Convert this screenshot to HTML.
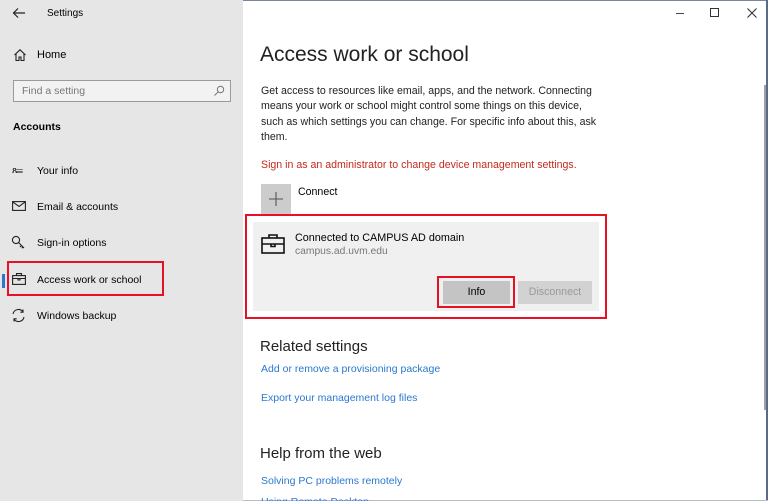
<!DOCTYPE html>
<html><head><style>
*{margin:0;padding:0;box-sizing:border-box}
html,body{width:768px;height:501px;overflow:hidden}
body{font-family:"Liberation Sans",sans-serif;background:#fff;position:relative;font-size:11px;color:#000}
.side{position:absolute;left:0;top:0;width:243px;height:501px;background:#e6e6e6}
.a{position:absolute;white-space:nowrap}
.red{border:2px solid #e81123;position:absolute}
.link{color:#2b78d0;font-size:10.5px}
.nav{font-size:10.5px}
svg{position:absolute}
</style></head><body>
<div style="position:absolute;left:0;top:0;width:768px;height:1px;background:#7a86a0"></div>
<div style="position:absolute;right:0;top:0;width:2px;height:501px;background:#5b6a8c"></div>
<div style="position:absolute;left:0;top:500px;width:768px;height:1px;background:#b8bcc8"></div>
<div class="side"></div>
<svg style="left:12px;top:7px" width="14" height="12" viewBox="0 0 14 12"><path d="M13 6H2M6 1.5L1.5 6L6 10.5" fill="none" stroke="#222" stroke-width="1.2"/></svg>
<div class="a" style="left:47px;top:8px;font-size:10px">Settings</div>
<svg style="left:13px;top:48px" width="14" height="14" viewBox="0 0 14 14"><path d="M1.5 7L7 1.8 12.5 7M3 5.5V12.5H6V9H8V12.5H11V5.5" fill="none" stroke="#222" stroke-width="1.1"/></svg>
<div class="a nav" style="left:37px;top:49px;font-size:11px">Home</div>
<div style="position:absolute;left:13px;top:80px;width:218px;height:22px;border:1.5px solid #9a9a9a;background:#f2f2f2"></div>
<div class="a" style="left:22px;top:85px;color:#777;font-size:10.5px">Find a setting</div>
<svg style="left:213px;top:85px" width="12" height="12" viewBox="0 0 12 12"><circle cx="7.5" cy="4.5" r="3.2" fill="none" stroke="#777"/><path d="M5.2 6.8L1.5 10.5" stroke="#777"/></svg>
<div class="a" style="left:13px;top:121px;font-weight:bold;font-size:10.5px">Accounts</div>
<div class="a" style="left:12px;top:165px;font-size:9px;letter-spacing:-1px">ጸ☰</div>
<div class="a nav" style="left:37px;top:165px">Your info</div>
<svg style="left:12px;top:201px" width="14" height="10" viewBox="0 0 14 10"><rect x="0.6" y="0.6" width="12.8" height="8.8" fill="none" stroke="#222" stroke-width="1.1"/><path d="M.6 .8L7 5.5 13.4 .8" fill="none" stroke="#222" stroke-width="1.1"/></svg>
<div class="a nav" style="left:37px;top:201px">Email &amp; accounts</div>
<svg style="left:11px;top:235px" width="15" height="15" viewBox="0 0 15 15"><circle cx="5" cy="5" r="3.6" fill="none" stroke="#222" stroke-width="1.1"/><path d="M7.5 7.5L13 13M10.5 10.5L9 12M12 12L10.8 13.2" fill="none" stroke="#222" stroke-width="1.1"/></svg>
<div class="a nav" style="left:37px;top:237px">Sign-in options</div>
<div style="position:absolute;left:2px;top:274px;width:3px;height:14px;background:#2b78d0"></div>
<div class="red" style="left:7px;top:261px;width:157px;height:35px"></div>
<svg style="left:12px;top:273px" width="14" height="12" viewBox="0 0 14 12"><rect x=".6" y="2.6" width="12.8" height="8.8" fill="none" stroke="#222" stroke-width="1.1"/><path d="M4.5 2.6V.6H9.5V2.6M.6 5.5H13.4M6 5.5V7H8V5.5" fill="none" stroke="#222" stroke-width="1.1"/></svg>
<div class="a nav" style="left:37px;top:274px">Access work or school</div>
<svg style="left:11px;top:308px" width="15" height="15" viewBox="0 0 15 15"><path d="M2 6A5.5 5.5 0 0 1 12 4M13 9A5.5 5.5 0 0 1 3 11M12 1.5V4.2H9.3M3 13.5V10.8H5.7" fill="none" stroke="#222" stroke-width="1.1"/></svg>
<div class="a nav" style="left:37px;top:310px">Windows backup</div>

<div style="position:absolute;left:676px;top:13px;width:8px;height:1.2px;background:#444"></div>
<div style="position:absolute;left:710px;top:8px;width:9px;height:9px;border:1.2px solid #333"></div>
<svg style="left:747px;top:8px" width="10" height="10" viewBox="0 0 10 10"><path d="M.5 .5L9.5 9.5M9.5 .5L.5 9.5" stroke="#333" stroke-width="1.1"/></svg>
<div style="position:absolute;left:764px;top:85px;width:1.5px;height:325px;background:#a0a0a0"></div>

<div class="a" style="left:260px;top:43px;font-size:21px;color:#222">Access work or school</div>
<div style="position:absolute;left:261px;top:84px;width:340px;font-size:10.6px;line-height:15.4px;color:#222">Get access to resources like email, apps, and the network. Connecting means your work or school might control some things on this device, such as which settings you can change. For specific info about this, ask them.</div>
<div class="a" style="left:261px;top:159px;font-size:10.6px;color:#c42b1c">Sign in as an administrator to change device management settings.</div>
<div style="position:absolute;left:261px;top:184px;width:30px;height:30px;background:#ccc"></div>
<svg style="left:269px;top:192px" width="14" height="14" viewBox="0 0 14 14"><path d="M7 0V14M0 7H14" stroke="#555" stroke-width="1.1"/></svg>
<div class="a" style="left:298px;top:186px;font-size:10.6px">Connect</div>
<div class="red" style="left:245px;top:214px;width:362px;height:105px"></div>
<div style="position:absolute;left:253px;top:222px;width:346px;height:89px;background:#f0f0f0"></div>
<svg style="left:261px;top:234px" width="24" height="20" viewBox="0 0 24 20"><rect x="1" y="4" width="22" height="15" fill="none" stroke="#111" stroke-width="1.6"/><path d="M8 4V1H16V4M1 10H23M10 10V12.5H14V10" fill="none" stroke="#111" stroke-width="1.6"/></svg>
<div class="a" style="left:295px;top:232px;font-size:10.8px">Connected to CAMPUS AD domain</div>
<div class="a" style="left:295px;top:246px;font-size:10.3px;color:#777">campus.ad.uvm.edu</div>
<div class="red" style="left:437px;top:276px;width:78px;height:32px"></div>
<div style="position:absolute;left:443px;top:281px;width:67px;height:23px;background:#c4c4c4;text-align:center;line-height:23px;font-size:10.6px">Info</div>
<div style="position:absolute;left:518px;top:281px;width:74px;height:23px;background:#d2d2d2;color:#999;text-align:center;line-height:23px;font-size:10.6px">Disconnect</div>
<div class="a" style="left:260px;top:338px;font-size:15px;color:#222">Related settings</div>
<div class="a link" style="left:261px;top:363px">Add or remove a provisioning package</div>
<div class="a link" style="left:261px;top:392px">Export your management log files</div>
<div class="a" style="left:260px;top:445px;font-size:15px;color:#222">Help from the web</div>
<div class="a link" style="left:261px;top:475px">Solving PC problems remotely</div>
<div class="a link" style="left:261px;top:496px">Using Remote Desktop</div>
</body></html>
